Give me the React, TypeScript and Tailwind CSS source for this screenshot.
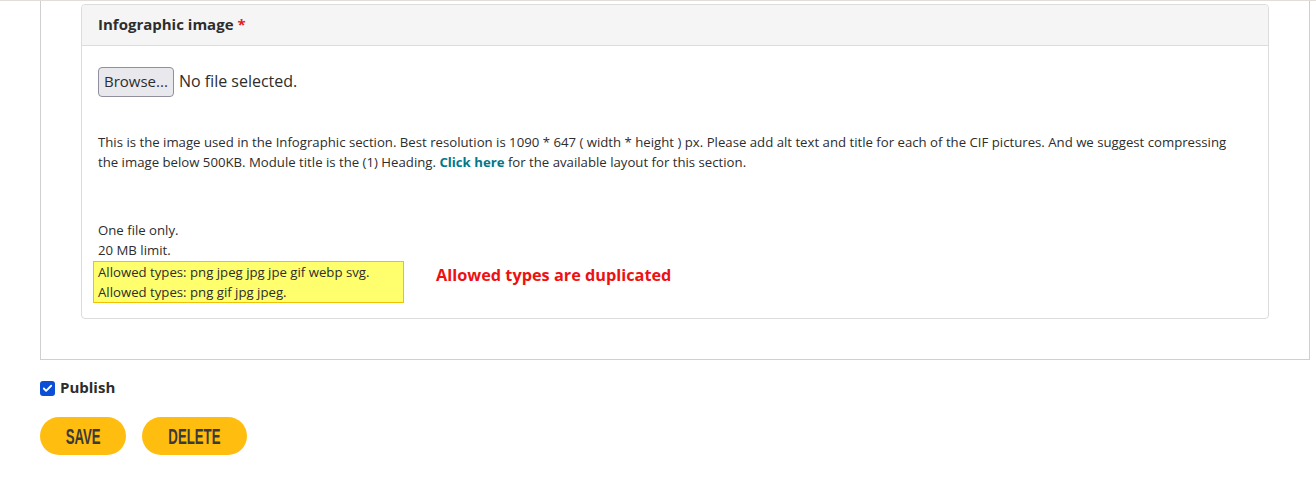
import { Check } from 'lucide-react'

const body = { fontFamily: '"Open Sans", "Noto Sans", sans-serif' }
const btnFont = { fontFamily: '"Liberation Sans", Arial, sans-serif' }

export default function App() {
  return (
    <div className="min-h-[485px] bg-white text-[#2d2d2d]" style={body}>
      <div className="border-t border-[#e2ddd8]" />
      <div className="ml-[40px] w-[1270px] border-x border-b border-[#cfcfcf] px-[40px] pt-[3px] pb-[40px]">
        <div className="rounded-[4px] border border-[#dcdcdc]">
          <div className="flex h-[41px] items-center rounded-t-[4px] border-b border-[#dcdcdc] bg-[#f5f5f5] px-[16px] pb-[2px] text-[15px] font-bold">
            Infographic image <span className="ml-1 text-[#e31b23]">*</span>
          </div>
          <div className="px-[16px] pt-[21px] pb-[15px]">
            <div className="flex items-center gap-[5px]">
              <button
                type="button"
                className="h-[30px] rounded-[4px] border border-[#8f8f9d] bg-[#e9e9ed] px-[5px] pb-[2px] text-[15px]"
              >
                Browse...
              </button>
              <span className="pb-[3px] text-[16px]">No file selected.</span>
            </div>
            <p className="mt-[35px] pr-[20px] text-[13.2px] leading-[20px]">
              This is the image used in the Infographic section. Best resolution is 1090 * 647 ( width * height ) px. Please add alt text and title for each of the CIF pictures. And we suggest compressing the image below 500KB. Module title is the (1) Heading.{' '}
              <a className="font-bold text-[#00788a]" href="#">
                Click here
              </a>{' '}
              for the available layout for this section.
            </p>
            <div className="relative mt-[48px] text-[13.2px] leading-[20px]">
              <div>One file only.</div>
              <div>20 MB limit.</div>
              <div className="-ml-[5px] mt-[1px] w-[311px] border border-[#f2c200] bg-[#ffff6e] px-[4px]">
                <div>Allowed types: png jpeg jpg jpe gif webp svg.</div>
                <div>Allowed types: png gif jpg jpeg.</div>
              </div>
              <div className="absolute left-[338px] top-[45px] text-[16.3px] font-bold text-[#ee1111]">
                Allowed types are duplicated
              </div>
            </div>
          </div>
        </div>
      </div>
      <div className="ml-[40px] mt-[18px] flex h-[20px] items-center gap-[5px]">
        <span className="flex h-[15px] w-[15px] items-center justify-center rounded-[3px] bg-[#0b4fd6]">
          <Check size={11} strokeWidth={4} className="text-white" />
        </span>
        <span className="pb-[1px] text-[15px] font-bold">Publish</span>
      </div>
      <div className="ml-[40px] mt-[19px] flex gap-[16px] text-[22px] font-bold text-[#3a3a3a]" style={btnFont}>
        <button type="button" className="flex h-[38px] w-[86px] items-center justify-center rounded-full bg-[#ffbd0f]">
          <span className="inline-block scale-x-60 uppercase">Save</span>
        </button>
        <button type="button" className="flex h-[38px] w-[105px] items-center justify-center rounded-full bg-[#ffbd0f]">
          <span className="inline-block scale-x-60 uppercase">Delete</span>
        </button>
      </div>
    </div>
  )
}
